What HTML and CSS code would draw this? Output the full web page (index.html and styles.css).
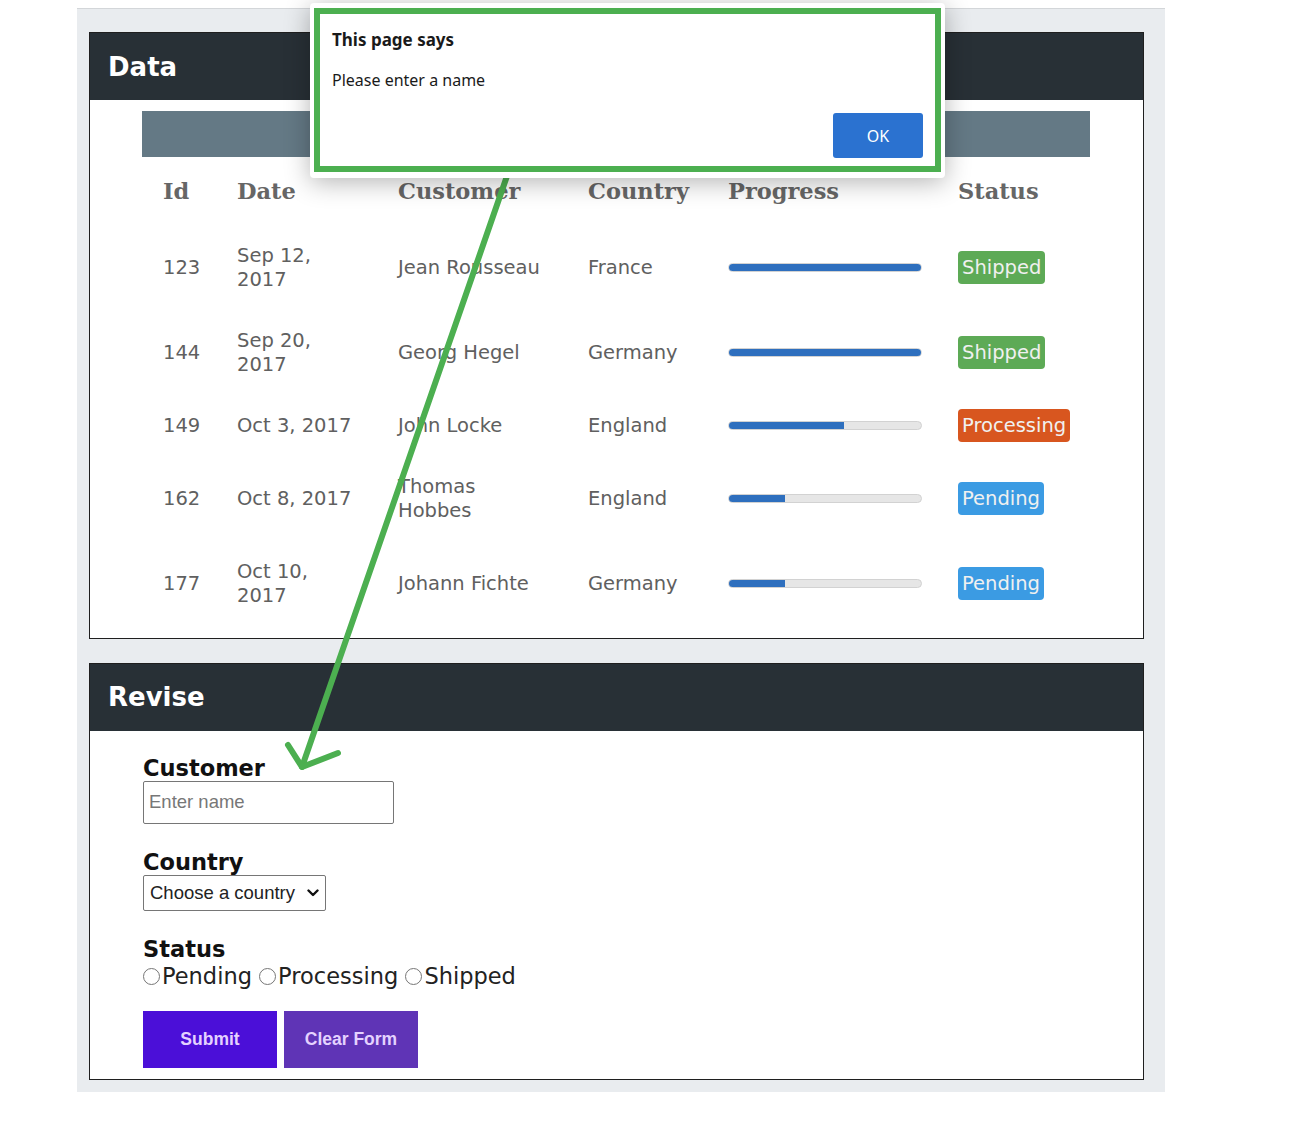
FILE: index.html
```html
<!DOCTYPE html>
<html lang="en">
<head>
  <meta charset="UTF-8">
  <title>Orders</title>
  <link rel="stylesheet" href="styles.css">
</head>
<body>
  <div class="panel">
    <div class="card">
      <div class="card-header"><h2>Data</h2></div>
      <div class="card-body data-body">
        <table class="orders">
          <caption></caption>
          <colgroup>
            <col class="c-id"><col class="c-date"><col class="c-cust"><col class="c-country"><col class="c-prog"><col class="c-status">
          </colgroup>
          <thead>
            <tr><th>Id</th><th>Date</th><th>Customer</th><th>Country</th><th>Progress</th><th>Status</th></tr>
          </thead>
          <tbody>
            <tr>
              <td>123</td><td>Sep 12, 2017</td><td>Jean Rousseau</td><td>France</td>
              <td><div class="bar"><div class="fill" style="width:100%"></div></div></td>
              <td><span class="badge shipped">Shipped</span></td>
            </tr>
            <tr>
              <td>144</td><td>Sep 20, 2017</td><td>Georg Hegel</td><td>Germany</td>
              <td><div class="bar"><div class="fill" style="width:100%"></div></div></td>
              <td><span class="badge shipped">Shipped</span></td>
            </tr>
            <tr>
              <td>149</td><td>Oct 3, 2017</td><td>John Locke</td><td>England</td>
              <td><div class="bar"><div class="fill" style="width:60%"></div></div></td>
              <td><span class="badge processing">Processing</span></td>
            </tr>
            <tr>
              <td>162</td><td>Oct 8, 2017</td><td>Thomas Hobbes</td><td>England</td>
              <td><div class="bar"><div class="fill" style="width:29%"></div></div></td>
              <td><span class="badge pending">Pending</span></td>
            </tr>
            <tr>
              <td>177</td><td>Oct 10, 2017</td><td>Johann Fichte</td><td>Germany</td>
              <td><div class="bar"><div class="fill" style="width:29%"></div></div></td>
              <td><span class="badge pending">Pending</span></td>
            </tr>
          </tbody>
        </table>
      </div>
    </div>

    <div class="card revise">
      <div class="card-header"><h2>Revise</h2></div>
      <form class="card-body revise-body">
        <div class="field">
          <label for="customer">Customer</label>
          <input type="text" id="customer" placeholder="Enter name">
        </div>
        <div class="field">
          <label for="country">Country</label>
          <div class="select-wrap">
            <select id="country">
              <option>Choose a country</option>
              <option>France</option>
              <option>Germany</option>
              <option>England</option>
            </select>
            <svg class="chevron" width="12" height="8" viewBox="0 0 12 8"><polyline points="1.5,1.5 6,6 10.5,1.5" /></svg>
          </div>
        </div>
        <div class="field status-field">
          <label>Status</label>
          <div class="radios">
            <label class="opt"><input type="radio" name="status">Pending</label>
            <label class="opt"><input type="radio" name="status">Processing</label>
            <label class="opt"><input type="radio" name="status">Shipped</label>
          </div>
        </div>
        <div class="actions">
          <button type="button" class="btn submit">Submit</button>
          <button type="button" class="btn clear">Clear Form</button>
        </div>
      </form>
    </div>
  </div>

  <svg class="arrow" width="1308" height="1132" viewBox="0 0 1308 1132">
    <line x1="507" y1="176" x2="302" y2="767" />
    <polyline points="288,745 302,767 338,753" />
  </svg>

  <div class="dialog">
    <div class="dialog-frame">
      <div class="dialog-title">This page says</div>
      <div class="dialog-msg">Please enter a name</div>
      <button type="button" class="ok-btn">OK</button>
    </div>
  </div>
</body>
</html>
```

FILE: styles.css
```css
* {
  box-sizing: border-box;
}
body {
  margin: 0;
  background: #fff;
  font-family: "DejaVu Sans", Verdana, sans-serif;
  color: #555;
}
.panel {
  width: 1088px;
  margin: 8px 0 0 77px;
  padding: 23px 21px 12px 12px;
  background: #e9ecef;
  border-top: 1px solid #d3d6d9;
}
.card {
  background: #fff;
  border: 1px solid #1f1f1f;
}
.card.revise {
  margin-top: 24px;
}
.card-header {
  height: 67px;
  background: #283036;
  display: flex;
  align-items: center;
  padding-left: 18px;
}
.card-header h2 {
  margin: 0;
  color: #fff;
  font-size: 26px;
  font-weight: bold;
}
.data-body {
  padding: 11px 53px 12px 52px;
}
.orders {
  width: 100%;
  border-collapse: collapse;
  table-layout: fixed;
}
.orders caption {
  height: 46px;
  background: #647985;
}
.c-id { width: 74px; }
.c-date { width: 161px; }
.c-cust { width: 190px; }
.c-country { width: 140px; }
.c-prog { width: 230px; }
.c-status { width: 153px; }
.orders th {
  text-align: left;
  font-family: "DejaVu Serif", Georgia, serif;
  font-weight: bold;
  font-size: 22.5px;
  line-height: 26px;
  color: #666;
  padding: 21px 21px 20.5px;
}
.orders td {
  font-size: 19.5px;
  line-height: 24px;
  color: #606060;
  padding: 19px 21px 18px;
  vertical-align: middle;
}
.bar {
  width: 194px;
  height: 9px;
  border-radius: 5px;
  background: #e6e6e6;
  border: 1px solid #d2d2d2;
  overflow: hidden;
}
.fill {
  height: 100%;
  background: #2e6fbe;
}
.badge {
  padding: 5px 4px;
  border-radius: 4px;
  color: #f0f0f0;
}
.badge.shipped { background: #5daa56; }
.badge.processing { background: #d8561f; }
.badge.pending { background: #3b9be3; }

.revise-body {
  display: block;
  padding: 24px 53px 11px;
}
.field {
  margin-bottom: 25px;
}
.field > label {
  display: block;
  font-weight: bold;
  font-size: 22.5px;
  line-height: 26px;
  color: #111;
}
.field input[type=text] {
  display: block;
  width: 251px;
  height: 43px;
  border: 1px solid #767676;
  border-radius: 2px;
  padding: 0 5px;
  font-family: "Liberation Sans", Arial, sans-serif;
  font-size: 18.5px;
}
.field input::placeholder {
  color: #777;
}
.select-wrap {
  position: relative;
  width: 183px;
}
.select-wrap select {
  display: block;
  width: 183px;
  height: 36px;
  border: 1px solid #767676;
  border-radius: 2px;
  background: #fff;
  font-family: "Liberation Sans", Arial, sans-serif;
  font-size: 18.5px;
  color: #222;
  padding: 0 6px;
  appearance: none;
  -webkit-appearance: none;
}
.chevron {
  position: absolute;
  right: 7px;
  top: 14px;
  pointer-events: none;
}
.chevron polyline {
  fill: none;
  stroke: #111;
  stroke-width: 2.4;
  stroke-linecap: round;
  stroke-linejoin: round;
}
.status-field {
  margin-bottom: 21px;
}
.radios {
  font-size: 22.5px;
  line-height: 28px;
  color: #222;
}
.opt input {
  width: 17px;
  height: 17px;
  margin: 0 2px 0 0;
  vertical-align: -1px;
}
.actions {
  display: flex;
  gap: 7px;
}
.btn {
  width: 134px;
  height: 57px;
  border: none;
  font-family: "Liberation Sans", Arial, sans-serif;
  font-weight: bold;
  font-size: 17.5px;
  color: #e4d2ff;
}
.btn.submit { background: #4b0fd8; }
.btn.clear { background: #5f34b6; }

.arrow {
  position: absolute;
  top: 0;
  left: 0;
  pointer-events: none;
}
.arrow line, .arrow polyline {
  stroke: #4caf50;
  stroke-width: 6;
  stroke-linecap: round;
  stroke-linejoin: round;
  fill: none;
}
.dialog {
  position: absolute;
  left: 310px;
  top: 3px;
  width: 635px;
  height: 175px;
  background: #fff;
  border-radius: 4px;
  box-shadow: 0 4px 26px rgba(0,0,0,0.3);
  padding: 5px 4px 6px;
}
.dialog-frame {
  height: 100%;
  border: 6px solid #4caf50;
  display: flex;
  flex-direction: column;
  padding: 14px 12px 8px;
  font-family: "Noto Sans", "Open Sans", sans-serif;
  color: #1a1a1a;
}
.dialog-title {
  font-weight: bold;
  font-size: 17px;
  line-height: 24px;
}
.dialog-msg {
  margin-top: 16px;
  font-size: 16px;
  line-height: 24px;
}
.ok-btn {
  margin-top: auto;
  align-self: flex-end;
  width: 90px;
  height: 45px;
  border: none;
  border-radius: 3px;
  background: #2b72d0;
  color: #fff;
  font-family: "Noto Sans", "Open Sans", sans-serif;
  font-size: 16px;
}
```
